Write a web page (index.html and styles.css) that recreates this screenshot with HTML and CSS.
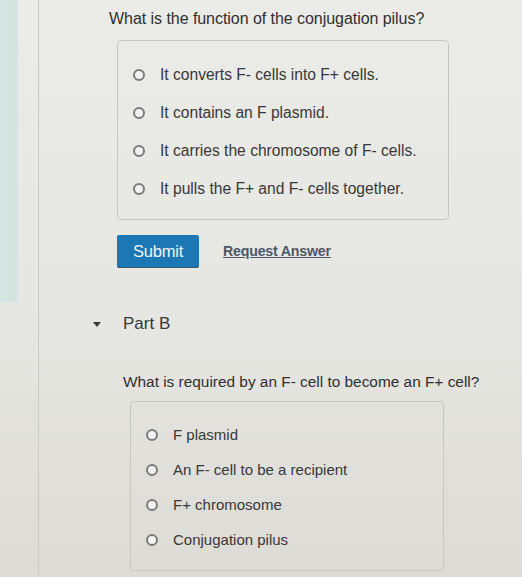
FILE: index.html
```html
<!DOCTYPE html>
<html lang="en">
<head>
<meta charset="utf-8">
<title>Conjugation</title>
<link rel="stylesheet" href="styles.css">
</head>
<body>
<div class="page">
  <div class="rail"><div class="rail-tint"></div></div>
  <div class="main">
    <section class="part part-a">
      <p class="question question-a">What is the function of the conjugation pilus?</p>
      <div class="choices choices-a">
        <label class="choice"><span class="radio"></span><span>It converts F- cells into F+ cells.</span></label>
        <label class="choice"><span class="radio"></span><span>It contains an F plasmid.</span></label>
        <label class="choice"><span class="radio"></span><span>It carries the chromosome of F- cells.</span></label>
        <label class="choice"><span class="radio"></span><span>It pulls the F+ and F- cells together.</span></label>
      </div>
      <div class="actions">
        <button class="submit">Submit</button>
        <a class="request" href="#">Request Answer</a>
      </div>
    </section>
    <div class="part-header">
      <span class="caret"></span>
      <span class="part-title">Part B</span>
    </div>
    <section class="part part-b">
      <p class="question question-b">What is required by an F- cell to become an F+ cell?</p>
      <div class="choices choices-b">
        <label class="choice"><span class="radio"></span><span>F plasmid</span></label>
        <label class="choice"><span class="radio"></span><span>An F- cell to be a recipient</span></label>
        <label class="choice"><span class="radio"></span><span>F+ chromosome</span></label>
        <label class="choice"><span class="radio"></span><span>Conjugation pilus</span></label>
      </div>
    </section>
  </div>
</div>
</body>
</html>
```
FILE: styles.css
```css
html, body {
  margin: 0;
  padding: 0;
}
body {
  width: 522px;
  height: 577px;
  overflow: hidden;
  background: linear-gradient(180deg, #ebebe8 0%, #e6e6e2 55%, #dcdbd6 100%);
  font-family: "Liberation Sans", Arial, sans-serif;
  color: #363636;
}
.page {
  display: flex;
  height: 577px;
}
.rail {
  width: 38px;
  flex: none;
  border-right: 1px solid #c9cac6;
}
.rail-tint {
  width: 18px;
  height: 302px;
  background: linear-gradient(90deg, #d4e6e3 0%, #d2e3df 80%, #dbe3e0 100%);
}
.main {
  flex: 1;
  padding: 10px 0 0 54px;
}
.part-a {
  padding-left: 16px;
}
.question {
  margin: 0;
  line-height: 18px;
  color: #303030;
}
.question-a {
  font-size: 16px;
  letter-spacing: -0.05px;
}
.question-b {
  font-size: 15.4px;
}
.choices {
  border: 1px solid #c6c7c3;
  border-radius: 4px;
  box-sizing: border-box;
  display: flex;
  flex-direction: column;
  color: #383838;
}
.choices-a {
  margin: 12px 0 0 8px;
  width: 332px;
  height: 180px;
  padding: 23px 0 0 15px;
  gap: 16px;
  font-size: 15.6px;
}
.choices-b {
  margin: 10px 0 0 7px;
  width: 314px;
  height: 170px;
  padding: 22px 0 0 15px;
  gap: 13px;
  font-size: 15px;
}
.choice {
  display: flex;
  align-items: center;
  gap: 15px;
  height: 22px;
  line-height: 22px;
}
.radio {
  width: 8px;
  height: 8px;
  border: 2px solid #7b7b7b;
  border-radius: 50%;
  flex: none;
  background: #f1f1ef;
}
.actions {
  display: flex;
  align-items: center;
  margin: 15px 0 0 8px;
  gap: 24px;
}
.submit {
  width: 82px;
  height: 32px;
  border: none;
  border-radius: 2px;
  background: #1b78b4;
  color: #eef4f8;
  font-family: "Liberation Sans", Arial, sans-serif;
  font-size: 16.5px;
  letter-spacing: -0.2px;
  padding: 0;
  box-shadow: 0 1px 0 #3e5668;
}
.request {
  font-size: 14.2px;
  font-weight: bold;
  color: #4b5866;
  text-decoration: underline;
  letter-spacing: -0.2px;
}
.part-header {
  display: flex;
  align-items: center;
  margin-top: 48px;
  height: 18px;
  gap: 22px;
}
.caret {
  width: 0;
  height: 0;
  border-left: 4px solid transparent;
  border-right: 4px solid transparent;
  border-top: 5px solid #3a3a3a;
}
.part-title {
  font-size: 17px;
  line-height: 18px;
  color: #383838;
}
.part-b {
  padding-left: 30px;
  margin-top: 40px;
}
```
